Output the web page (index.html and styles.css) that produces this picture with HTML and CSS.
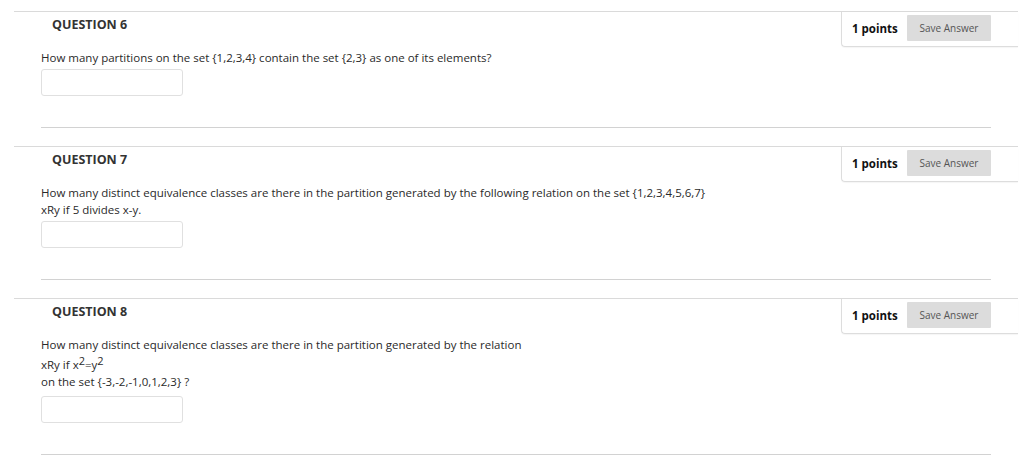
FILE: index.html
```html
<!DOCTYPE html>
<html lang="en">
<head>
<meta charset="utf-8">
<title>Questions</title>
<link rel="stylesheet" href="styles.css">
</head>
<body>
<div class="page">
  <div class="question">
    <div class="q-head">
      <h3 class="q-title">QUESTION 6</h3>
      <div class="points-box"><span class="points">1 points</span><button class="save" type="button">Save Answer</button></div>
    </div>
    <div class="q-body">
      <p class="q-text">How many partitions on the set {1,2,3,4} contain the set {2,3} as one of its elements?</p>
      <input class="answer" type="text">
      <hr class="q-sep">
    </div>
  </div>

  <div class="question">
    <div class="q-head">
      <h3 class="q-title">QUESTION 7</h3>
      <div class="points-box"><span class="points">1 points</span><button class="save" type="button">Save Answer</button></div>
    </div>
    <div class="q-body">
      <p class="q-text">How many distinct equivalence classes are there in the partition generated by the following relation on the set {1,2,3,4,5,6,7}<br>xRy if 5 divides x-y.</p>
      <input class="answer" type="text">
      <hr class="q-sep">
    </div>
  </div>

  <div class="question">
    <div class="q-head">
      <h3 class="q-title">QUESTION 8</h3>
      <div class="points-box"><span class="points">1 points</span><button class="save" type="button">Save Answer</button></div>
    </div>
    <div class="q-body">
      <p class="q-text q-text-gap">How many distinct equivalence classes are there in the partition generated by the relation<br>xRy if x<sup>2</sup>=y<sup>2</sup><br>on the set {-3,-2,-1,0,1,2,3} ?</p>
      <input class="answer" type="text">
      <hr class="q-sep">
    </div>
  </div>
</div>
</body>
</html>
```

FILE: styles.css
```css
* { box-sizing: border-box; }

html, body {
  margin: 0;
  padding: 0;
  background: #ffffff;
}

body {
  font-family: "Open Sans", "DejaVu Sans", sans-serif;
  color: #333333;
}

.page {
  padding-top: 11px;
}

.question {
  margin-left: 14px;
  width: 1004px;
  border-top: 1px solid #dadada;
  margin-bottom: 18px;
}

.q-head {
  display: flex;
  justify-content: space-between;
  align-items: flex-start;
}

.q-title {
  margin: 0;
  padding: 5px 0 0 38px;
  font-size: 12.5px;
  line-height: 16px;
  font-weight: 700;
  color: #333333;
}

.points-box {
  width: 177px;
  display: flex;
  align-items: center;
  padding: 3px 27px 5px 10px;
  border-left: 1px solid #dddddd;
  border-bottom: 1px solid #dddddd;
  border-bottom-left-radius: 4px;
  box-shadow: 0 1px 1px rgba(0, 0, 0, 0.04);
}

.points {
  flex: 1;
  font-size: 11.5px;
  font-weight: 700;
  color: #111111;
}

.save {
  width: 84px;
  height: 26px;
  padding: 0;
  border: 0;
  border-radius: 1px;
  background: #dcdcdc;
  font-family: "Open Sans", "DejaVu Sans", sans-serif;
  font-size: 10px;
  color: #555555;
}

.q-body {
  padding: 0 27px;
}

.q-text {
  margin: 2px 0 0;
  font-size: 11.5px;
  line-height: 17px;
  color: #2a2a2a;
}

.q-text sup {
  font-size: 11px;
  line-height: 15px;
  vertical-align: 4px;
}

.q-text-gap {
  margin-bottom: 6px;
}

.answer {
  display: block;
  margin-top: 3px;
  width: 142px;
  height: 27px;
  border: 1px solid #e0e0e0;
  border-radius: 3px;
  background: #ffffff;
}

.q-sep {
  margin: 31px 0 0;
  border: 0;
  border-top: 1px solid #d2d2d2;
  height: 0;
}
```
